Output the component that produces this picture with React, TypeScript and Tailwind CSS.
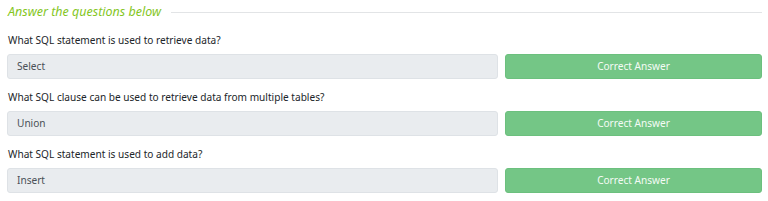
const questions = [
  { q: 'What SQL statement is used to retrieve data?', a: 'Select' },
  { q: 'What SQL clause can be used to retrieve data from multiple tables?', a: 'Union' },
  { q: 'What SQL statement is used to add data?', a: 'Insert' },
]

export default function App() {
  return (
    <div className="w-[768px] h-[201px] bg-white pl-[7px] pr-[6px] font-['Noto_Sans',sans-serif] overflow-hidden">
      {/* Section heading */}
      <div className="flex items-center h-[24px] pl-[1px]">
        <span className="italic text-[12.5px] text-[#84c61e] whitespace-nowrap">Answer the questions below</span>
        <div className="flex-1 h-px bg-[#e2e4e6] ml-[10px]" />
      </div>

      <div className="flex flex-col">
        {questions.map(item => (
          <div key={item.q} className="flex flex-col">
            <div className="h-[30px] flex items-center pt-[3px] pl-[1px] text-[10.1px] text-[#212529]">{item.q}</div>
            <div className="flex gap-[7px] h-[25px]">
              <div className="w-[491px] bg-[#e9ecef] border border-[#dee2e6] rounded-[3px] flex items-center px-[9px] text-[10.1px] text-[#495057]">
                {item.a}
              </div>
              <button className="flex-1 bg-[#74c686] border border-[#6cc07e] rounded-[3px] text-[#f4fbf5] text-[10.1px] flex items-center justify-center">
                Correct Answer
              </button>
            </div>
            <div className="h-[2px]" />
          </div>
        ))}
      </div>
    </div>
  )
}
